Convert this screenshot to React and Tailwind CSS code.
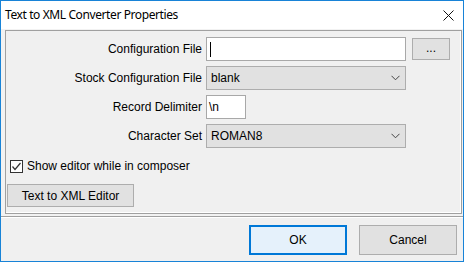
import React from 'react';

const font = { fontFamily: '"Liberation Sans", Arial, sans-serif' };

function Chevron() {
  return (
    <svg width="9" height="6" viewBox="0 0 9 6" className="shrink-0">
      <path d="M0.5 0.8 L4.5 4.8 L8.5 0.8" fill="none" stroke="#444" strokeWidth="1" />
    </svg>
  );
}

function Combo({ value }) {
  return (
    <div className="w-[200px] h-[24px] bg-[#e1e1e1] border border-[#adadad] flex items-center justify-between pl-[4px] pr-[5px] text-[12px] text-black">
      <span>{value}</span>
      <Chevron />
    </div>
  );
}

function Row({ label, children, className = '' }) {
  return (
    <div className={`flex items-center ${className}`}>
      <div className="w-[196px] text-right text-[12px] text-black">{label}</div>
      <div className="ml-[4px] flex items-center">{children}</div>
    </div>
  );
}

export default function App() {
  return (
    <div className="w-[464px] h-[262px] border border-[#1883d7] bg-[#f0f0f0] flex flex-col overflow-hidden" style={font}>
      <div className="h-[28px] bg-white flex items-center justify-between pl-[4px] pr-[9px] shrink-0">
        <span className="text-[12px] tracking-[-0.4px] text-black" style={{ fontFamily: '"Noto Sans", "Open Sans", sans-serif' }}>
          Text to XML Converter Properties
        </span>
        <svg width="11" height="11" viewBox="0 0 11 11">
          <path d="M0.5 0.5 L10.5 10.5 M10.5 0.5 L0.5 10.5" stroke="#111" strokeWidth="1" />
        </svg>
      </div>

      <div className="h-[187px] bg-[#f2f2f2] pl-[4px] pr-[1px] pt-[1px] shrink-0">
        <div className="h-[184px] border border-[#a0a0a0] bg-[#f0f0f0]">
          <div className="h-full border border-white border-l-0 border-t-0 pt-[6px]">
            <Row label="Configuration File">
              <div className="w-[200px] h-[24px] bg-white border border-[#a8a8a8] flex items-center pl-[3px]">
                <div className="w-px h-[15px] bg-black" />
              </div>
              <button className="ml-[6px] w-[38px] h-[22px] bg-[#e1e1e1] border border-[#adadad] text-[12px] leading-none text-black pb-[2px]">
                ...
              </button>
            </Row>
            <Row label="Stock Configuration File" className="mt-[5px]">
              <Combo value="blank" />
            </Row>
            <Row label="Record Delimiter" className="mt-[5px]">
              <div className="w-[40px] h-[24px] bg-white border border-[#a8a8a8] flex items-center pl-[2px] text-[12px] text-black">
                \n
              </div>
            </Row>
            <Row label="Character Set" className="mt-[5px]">
              <Combo value="ROMAN8" />
            </Row>

            <div className="flex items-center h-[18px] mt-[9px] ml-[4px]">
              <div className="w-[13px] h-[13px] bg-white border border-[#333] flex items-center justify-center">
                <svg width="11" height="11" viewBox="0 0 11 11">
                  <path d="M1.5 5.5 L4 8.5 L9.5 2" fill="none" stroke="#333" strokeWidth="1.2" />
                </svg>
              </div>
              <span className="ml-[4px] text-[12px] text-black">Show editor while in composer</span>
            </div>

            <button className="mt-[9px] ml-[1px] w-[127px] h-[23px] bg-[#e1e1e1] border border-[#adadad] text-[12px] text-black flex items-center justify-center">
              Text to XML Editor
            </button>
          </div>
        </div>
      </div>

      <div className="h-[2px] border-t border-[#a0a0a0] bg-white shrink-0" />

      <div className="flex justify-end gap-[12px] pt-[7px] pr-[6px]">
        <button className="w-[98px] h-[30px] bg-[#e5f1fb] border-2 border-[#0078d7] text-[12px] text-black">
          OK
        </button>
        <button className="w-[98px] h-[30px] bg-[#e1e1e1] border border-[#adadad] text-[12px] text-black">
          Cancel
        </button>
      </div>
    </div>
  );
}
